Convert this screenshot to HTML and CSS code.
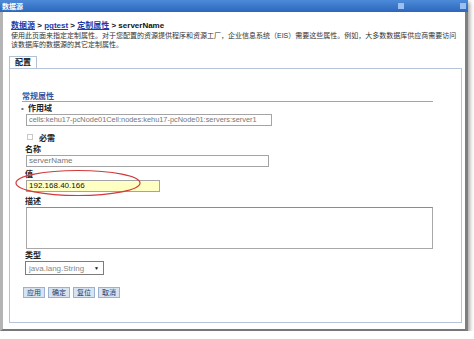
FILE: index.html
```html
<!DOCTYPE html>
<html lang="zh-CN">
<head>
  <meta charset="UTF-8">
  <title>数据源</title>
  <link rel="stylesheet" href="styles.css">
</head>
<body>

  <div class="window">
    <div class="titlebar">
      <span class="title">数据源</span>
      <span class="tb-icon"></span>
      <span class="tb-icon last"></span>
    </div>

    <div class="frame">
      <!-- breadcrumb -->
      <div class="crumbs">
        <a href="#">数据源</a> &gt; <a href="#">pgtest</a> &gt; <a href="#">定制属性</a> &gt; serverName
      </div>
      <p class="intro">使用此页面来指定定制属性。对于您配置的资源提供程序和资源工厂，企业信息系统（EIS）需要这些属性。例如，大多数数据库供应商需要访问<br>该数据库的数据源的其它定制属性。</p>

      <div class="tab">配置</div>
      <div class="panel">
        <div class="section">常规属性</div>

        <div class="label req"><span class="dot">•</span>作用域</div>
        <div class="field scope">cells:kehu17-pcNode01Cell:nodes:kehu17-pcNode01:servers:server1</div>

        <div class="check-row"><span class="checkbox"></span>必需</div>

        <div class="label">名称</div>
        <div class="field name">serverName</div>

        <div class="label">值</div>
        <div class="field value">192.168.40.166</div>

        <div class="label tall">描述</div>
        <div class="textarea"></div>

        <div class="label">类型</div>
        <div class="select"><span>java.lang.String</span><span class="arrow">▼</span></div>

        <div class="buttons">
          <button type="button">应用</button>
          <button type="button">确定</button>
          <button type="button">复位</button>
          <button type="button">取消</button>
        </div>

        <!-- hand-drawn highlight around the value field -->
        <svg class="circle" width="128" height="30" viewBox="0 0 128 30">
          <ellipse cx="64" cy="15" rx="62" ry="12.5" fill="none" stroke="#d23a3a" stroke-width="1.2"/>
        </svg>
      </div>
    </div>
  </div>

</body>
</html>
```

FILE: styles.css
```css
* {
  box-sizing: border-box;
  margin: 0;
  padding: 0;
}
body {
  font-family: "Liberation Sans", "Noto Sans CJK SC", sans-serif;
  background-color: #fff;
  color: #222;
}
.window {
  width: 468px;
  box-shadow: 2px 2px 4px rgba(0, 0, 0, 0.35);
}
.titlebar {
  height: 12px;
  background: linear-gradient(#4d8ad8, #2c67bc);
  display: flex;
  align-items: center;
  padding-left: 2px;
}
.title {
  color: #fff;
  font-size: 7px;
  font-weight: bold;
  flex: 1;
}
.tb-icon {
  width: 6px;
  height: 6px;
  background-color: #9cc0ee;
  margin-right: 56px;
}
.tb-icon.last {
  margin-right: 2px;
}
.frame {
  height: 319px;
  border-left: 3px solid #b4b4b4;
  border-right: 3px solid #7f7f7f;
  border-bottom: 2px solid #777;
  padding: 8px 3px 0 6px;
}
.crumbs {
  font-size: 8px;
  font-weight: bold;
  line-height: 11px;
  padding-left: 2px;
  color: #111;
}
.crumbs a {
  color: #1c3aa8;
}
.intro {
  font-size: 7px;
  line-height: 9px;
  padding-left: 2px;
  color: #333;
  white-space: nowrap;
}
.tab {
  display: inline-block;
  margin-top: 6px;
  height: 13px;
  padding: 0 5px;
  border: 1px solid #b3c1d8;
  border-bottom: none;
  font-size: 8px;
  font-weight: bold;
  line-height: 12px;
  position: relative;
  top: 1px;
  background-color: #fff;
}
.panel {
  position: relative;
  height: 255px;
  border: 1px solid #b6c4da;
  padding: 23px 0 0 16px;
}
.section {
  width: 411px;
  margin-left: -4px;
  font-size: 8px;
  font-weight: bold;
  line-height: 9px;
  color: #3553a0;
  border-bottom: 1px solid #93a6c6;
}
.label {
  margin-top: 2px;
  margin-left: -1px;
  font-size: 8px;
  font-weight: bold;
  line-height: 10px;
  color: #222;
}
.label.req {
  margin-left: -5px;
}
.dot {
  display: inline-block;
  width: 7px;
  color: #777;
}
.field {
  height: 12px;
  border: 1px solid #a4a4a4;
  font-size: 8px;
  line-height: 10px;
  padding-left: 2px;
  color: #777;
  white-space: nowrap;
  overflow: hidden;
}
.field.scope {
  width: 246px;
  font-size: 7.4px;
}
.field.name {
  width: 243px;
  margin-bottom: 3px;
}
.field.value {
  width: 134px;
  background-color: #ffffc4;
  color: #111;
  margin-bottom: 4px;
}
.check-row {
  display: flex;
  align-items: center;
  margin-top: 5px;
  margin-bottom: 1px;
  height: 12px;
  font-size: 8px;
  font-weight: bold;
}
.checkbox {
  width: 6px;
  height: 6px;
  border: 1px solid #c8c8c8;
  margin: 0 6px 0 1px;
}
.label.tall {
  margin-top: 0;
  line-height: 11px;
}
.textarea {
  width: 407px;
  height: 42px;
  border: 1px solid #a8a8a8;
  border-top-color: #8c8c8c;
  margin-bottom: 1px;
}
.select {
  width: 79px;
  height: 14px;
  margin-left: -1px;
  border: 1px solid #7c7c7c;
  display: flex;
  align-items: center;
  justify-content: space-between;
  padding: 0 4px 0 3px;
  font-size: 8px;
  color: #888;
}
.arrow {
  font-size: 5px;
  color: #111;
}
.buttons {
  display: flex;
  gap: 3px;
  margin-top: 12px;
  margin-left: -3px;
}
.buttons button {
  height: 11px;
  width: 22px;
  font-family: "Noto Sans CJK SC", sans-serif;
  font-size: 7px;
  line-height: 9px;
  color: #203a6c;
  background-color: #d7e3f1;
  border: 1px solid #9cb1cf;
}
.circle {
  position: absolute;
  left: 4px;
  top: 99px;
}
```
